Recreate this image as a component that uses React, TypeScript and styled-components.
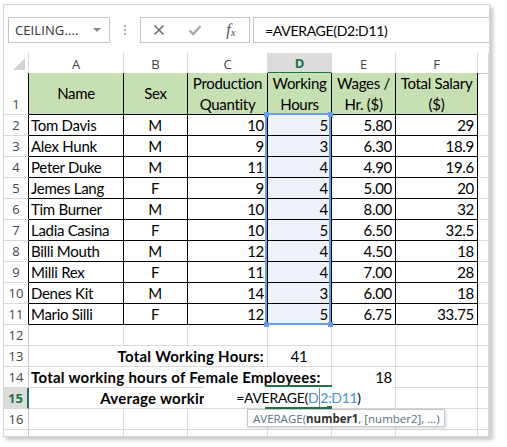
import React from 'react';
import styled, { createGlobalStyle } from 'styled-components';

const CELL_FONT = `Lato, "Liberation Sans", sans-serif`;
const UI_FONT = `"Open Sans", "Noto Sans", sans-serif`;
const GRID = '#dadada';
const GREEN = '#217346';
const SEL = '#6a9be6';

const GlobalStyle = createGlobalStyle`
  html, body { margin: 0; padding: 0; background: #fff; }
  body { width: 507px; height: 447px; overflow: hidden; }
`;

const Frame = styled.div`
  box-sizing: border-box;
  margin: 4px 0 0 3px;
  width: 487px;
  height: 433px;
  border: 1px solid #d6d6d6;
  box-shadow: 3px 3px 4px rgba(0, 0, 0, 0.22);
  background: #fff;
  overflow: hidden;
  display: flex;
  flex-direction: column;
`;

const Toolbar = styled.div`
  box-sizing: border-box;
  height: 48px;
  padding: 12px 0 0 4px;
  display: flex;
  align-items: flex-start;
  flex-shrink: 0;
`;

const Box = styled.div<{ $w?: number }>`
  box-sizing: border-box;
  height: 26px;
  border: 1px solid #c6c6c6;
  background: #fff;
  display: flex;
  align-items: center;
  ${(p) => (p.$w ? `width: ${p.$w}px;` : 'flex: 1; border-right: none;')}
`;

const NameText = styled.span`
  flex: 1;
  padding-left: 6px;
  font: 13px ${UI_FONT};
  color: #333;
  letter-spacing: 0.1px;
`;

const DropArrow = styled.span`
  width: 0;
  height: 0;
  margin-right: 8px;
  border-left: 4px solid transparent;
  border-right: 4px solid transparent;
  border-top: 4px solid #8a8a8a;
`;

const Grip = styled.div`
  width: 30px;
  height: 26px;
  display: flex;
  flex-direction: column;
  align-items: center;
  justify-content: center;
  gap: 2px;
  & > i {
    width: 2px;
    height: 2px;
    background: #b0b0b0;
  }
`;

const IconSlot = styled.span`
  width: 36px;
  display: flex;
  align-items: center;
  justify-content: center;
`;

const Fx = styled.span`
  font: italic 16px "Liberation Serif", "DejaVu Serif", serif;
  color: #555;
  & sub {
    font-size: 11px;
    vertical-align: -1px;
  }
`;

const FormulaText = styled.span`
  padding-left: 11px;
  font: 14px ${CELL_FONT};
  letter-spacing: -0.3px;
  color: #000;
`;

const Sheet = styled.div`
  position: relative;
  flex: 1;
`;

const Row = styled.div<{ $h: number }>`
  display: grid;
  grid-template-columns: 25px 95px 64px 80px 64px 64px 82px 1fr;
  height: ${(p) => p.$h}px;
`;

const ColHead = styled.div<{ $active?: boolean; $dark?: boolean }>`
  box-sizing: border-box;
  display: flex;
  align-items: center;
  justify-content: center;
  padding-top: 1px;
  border-right: 1px solid ${GRID};
  border-bottom: ${(p) =>
    p.$active ? `2px solid ${GREEN}` : `1px solid ${p.$dark ? '#9a9a9a' : '#c8c8c8'}`};
  background: ${(p) => (p.$active ? '#dcdcdc' : '#fff')};
  font: ${(p) => (p.$active ? 700 : 400)} 13px ${UI_FONT};
  color: ${(p) => (p.$active ? GREEN : '#444')};
`;

const Corner = styled.div`
  box-sizing: border-box;
  border-right: 1px solid ${GRID};
  border-bottom: 1px solid #c8c8c8;
  display: flex;
  align-items: flex-end;
  justify-content: flex-end;
  padding: 0 3px 3px 0;
`;

const RowHead = styled.div<{ $active?: boolean; $dark?: boolean }>`
  box-sizing: border-box;
  display: flex;
  align-items: flex-end;
  justify-content: center;
  padding-bottom: 1px;
  border-right: ${(p) =>
    p.$active ? `2px solid ${GREEN}` : `1px solid ${p.$dark ? '#000' : '#c8c8c8'}`};
  border-bottom: 1px solid ${GRID};
  background: ${(p) => (p.$active ? '#dcdcdc' : '#fff')};
  font: ${(p) => (p.$active ? 700 : 400)} 13px ${UI_FONT};
  color: ${(p) => (p.$active ? GREEN : '#444')};
  line-height: 18px;
`;

type Align = 'left' | 'center' | 'right';
const justify = { left: 'flex-start', center: 'center', right: 'flex-end' };

const Cell = styled.div<{
  $span?: number;
  $align?: Align;
  $boxed?: boolean;
  $selected?: boolean;
  $bold?: boolean;
}>`
  box-sizing: border-box;
  grid-column: span ${(p) => p.$span ?? 1};
  display: flex;
  align-items: flex-end;
  justify-content: ${(p) => justify[p.$align ?? 'left']};
  padding: 0 3px 0 2px;
  border-right: 1px solid ${(p) => (p.$boxed ? '#000' : GRID)};
  border-bottom: 1px solid ${(p) => (p.$boxed ? '#000' : GRID)};
  background: ${(p) => (p.$selected ? '#eef3fb' : 'transparent')};
  font: ${(p) => (p.$bold ? 700 : 400)} 15px ${CELL_FONT};
  letter-spacing: ${(p) => (p.$bold ? '0.25px' : '-0.3px')};
  line-height: 19px;
  color: #000;
  white-space: nowrap;
  overflow: hidden;
`;

const HeadCell = styled(Cell)`
  align-items: center;
  justify-content: center;
  text-align: center;
  padding: 0;
  line-height: 21px;
  background: #c6e0b4;
`;

const Selection = styled.div`
  position: absolute;
  box-sizing: border-box;
  left: 261px;
  top: 60px;
  width: 66px;
  height: 212px;
  border: 2px solid ${SEL};
  pointer-events: none;
`;

const Handle = styled.i<{ $x: 'left' | 'right'; $y: 'top' | 'bottom' }>`
  position: absolute;
  width: 5px;
  height: 5px;
  background: ${SEL};
  ${(p) => p.$x}: -3.5px;
  ${(p) => p.$y}: -3.5px;
`;

const ActiveCell = styled.div`
  position: absolute;
  box-sizing: border-box;
  left: 261px;
  top: 332px;
  width: 67px;
  height: 24px;
  border: 2px solid ${GREEN};
`;

const FillHandle = styled.i`
  position: absolute;
  left: 323px;
  top: 353px;
  width: 5px;
  height: 5px;
  background: ${GREEN};
  z-index: 3;
`;

const Editor = styled.div`
  position: absolute;
  left: 200px;
  top: 334px;
  width: 189px;
  height: 20px;
  background: #fff;
  display: flex;
  align-items: flex-end;
  justify-content: center;
  font: 14px ${CELL_FONT};
  letter-spacing: -0.3px;
  line-height: 19px;
  color: #000;
  white-space: nowrap;
  z-index: 2;
`;

const Ref = styled.span`
  color: #4a8ed8;
`;

const Caret = styled.span`
  display: inline-block;
  width: 1px;
  height: 19px;
  margin: 0 0.5px;
  vertical-align: -4px;
  background: #8a8a8a;
`;

const Tip = styled.div`
  position: absolute;
  box-sizing: border-box;
  left: 243px;
  top: 356px;
  width: 198px;
  height: 18px;
  padding-left: 5px;
  background: #fff;
  border: 1px solid #c9c9c9;
  box-shadow: 1px 1px 3px rgba(0, 0, 0, 0.18);
  display: flex;
  align-items: center;
  font: 11.5px ${UI_FONT};
  color: #55707f;
  white-space: nowrap;
  z-index: 4;
  & b {
    color: #333;
    font-weight: 700;
  }
`;

const data: [string, string, number, number, string, string][] = [
  ['Tom Davis', 'M', 10, 5, '5.80', '29'],
  ['Alex Hunk', 'M', 9, 3, '6.30', '18.9'],
  ['Peter Duke', 'M', 11, 4, '4.90', '19.6'],
  ['Jemes Lang', 'F', 9, 4, '5.00', '20'],
  ['Tim Burner', 'M', 10, 4, '8.00', '32'],
  ['Ladia Casina', 'F', 10, 5, '6.50', '32.5'],
  ['Billi Mouth', 'M', 12, 4, '4.50', '18'],
  ['Milli Rex', 'F', 11, 4, '7.00', '28'],
  ['Denes Kit', 'M', 14, 3, '6.00', '18'],
  ['Mario Silli', 'F', 12, 5, '6.75', '33.75'],
];

const XIcon = () => (
  <svg width="12" height="12" viewBox="0 0 12 12">
    <path d="M1.5 1.5 L10.5 10.5 M10.5 1.5 L1.5 10.5" stroke="#6f6f6f" strokeWidth="1.6" fill="none" />
  </svg>
);

const CheckIcon = () => (
  <svg width="14" height="12" viewBox="0 0 14 12">
    <path d="M1.5 6.5 L5.2 10 L12.5 2" stroke="#a8a8a8" strokeWidth="2.4" fill="none" />
  </svg>
);

const CornerTriangle = () => (
  <svg width="12" height="12" viewBox="0 0 12 12">
    <path d="M12 0 L12 12 L0 12 Z" fill="#d3d3d3" />
  </svg>
);

const Blank = ({ n }: { n: number }) => (
  <>
    {Array.from({ length: n }, (_, i) => (
      <Cell key={i} />
    ))}
  </>
);

export default function App() {
  return (
    <>
      <GlobalStyle />
      <Frame>
        <Toolbar>
          <Box $w={102}>
            <NameText>CEILING....</NameText>
            <DropArrow />
          </Box>
          <Grip>
            <i />
            <i />
            <i />
          </Grip>
          <Box $w={110}>
            <IconSlot>
              <XIcon />
            </IconSlot>
            <IconSlot>
              <CheckIcon />
            </IconSlot>
            <IconSlot>
              <Fx>
                f<sub>x</sub>
              </Fx>
            </IconSlot>
          </Box>
          <div style={{ width: 3 }} />
          <Box>
            <FormulaText>=AVERAGE(D2:D11)</FormulaText>
          </Box>
        </Toolbar>
        <Sheet>
          <Row $h={20}>
            <Corner>
              <CornerTriangle />
            </Corner>
            {['A', 'B', 'C', 'D', 'E', 'F'].map((c) => (
              <ColHead key={c} $active={c === 'D'} $dark>
                {c}
              </ColHead>
            ))}
            <ColHead />
          </Row>
          <Row $h={42}>
            <RowHead $dark>1</RowHead>
            <HeadCell $boxed>Name</HeadCell>
            <HeadCell $boxed>Sex</HeadCell>
            <HeadCell $boxed>
              Production
              <br />
              Quantity
            </HeadCell>
            <HeadCell $boxed>
              Working
              <br />
              Hours
            </HeadCell>
            <HeadCell $boxed>
              Wages /<br />
              Hr. ($)
            </HeadCell>
            <HeadCell $boxed>
              Total Salary
              <br />($)
            </HeadCell>
            <Cell />
          </Row>
          {data.map((r, i) => (
            <Row $h={21} key={r[0]}>
              <RowHead $dark>{i + 2}</RowHead>
              <Cell $boxed>{r[0]}</Cell>
              <Cell $boxed $align="center">
                {r[1]}
              </Cell>
              <Cell $boxed $align="right">
                {r[2]}
              </Cell>
              <Cell $boxed $align="right" $selected>
                {r[3]}
              </Cell>
              <Cell $boxed $align="right">
                {r[4]}
              </Cell>
              <Cell $boxed $align="right">
                {r[5]}
              </Cell>
              <Cell />
            </Row>
          ))}
          <Row $h={21}>
            <RowHead>12</RowHead>
            <Blank n={7} />
          </Row>
          <Row $h={21}>
            <RowHead>13</RowHead>
            <Cell $span={3} $align="right" $bold>
              Total Working Hours:
            </Cell>
            <Cell $align="center">41</Cell>
            <Blank n={3} />
          </Row>
          <Row $h={21}>
            <RowHead>14</RowHead>
            <Cell $span={4} $bold>
              Total working hours of Female Employees:
            </Cell>
            <Cell $align="right">18</Cell>
            <Blank n={2} />
          </Row>
          <Row $h={21}>
            <RowHead $active>15</RowHead>
            <Cell $span={4} $align="center" $bold>
              Average working hours
            </Cell>
            <Blank n={3} />
          </Row>
          <Row $h={21}>
            <RowHead>16</RowHead>
            <Blank n={7} />
          </Row>
          <Row $h={21}>
            <RowHead>17</RowHead>
            <Blank n={7} />
          </Row>

          <Selection>
            <Handle $x="left" $y="top" />
            <Handle $x="right" $y="top" />
            <Handle $x="left" $y="bottom" />
            <Handle $x="right" $y="bottom" />
          </Selection>
          <ActiveCell />
          <Editor>
            =AVERAGE(<Ref>D</Ref>
            <Caret />
            <Ref>2:D11</Ref>)
          </Editor>
          <FillHandle />
          <Tip>
            AVERAGE(<b>number1</b>, [number2], ...)
          </Tip>
        </Sheet>
      </Frame>
    </>
  );
}
